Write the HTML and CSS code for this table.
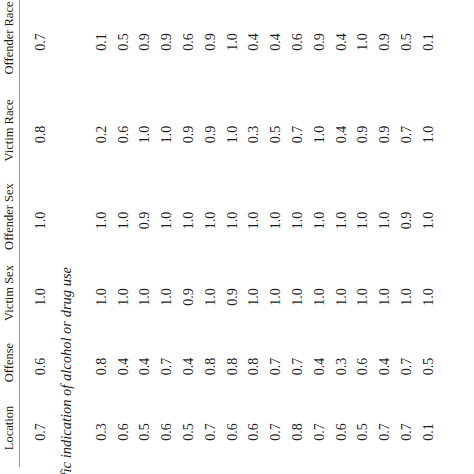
FILE: index.html
```html
<!DOCTYPE html>
<html>
<head>
<meta charset="utf-8">
<link rel="stylesheet" href="styles.css">
</head>
<body>
<div class="page">
  <div class="sheet">
    <div class="head-rule">
      <div class="grid head">
        <div>Location</div><div>Offense</div><div>Victim Sex</div><div>Offender Sex</div><div>Victim Race</div><div>Offender Race</div>
      </div>
    </div>
    <div class="grid row first"><div>0.7</div><div>0.6</div><div>1.0</div><div>1.0</div><div>0.8</div><div>0.7</div></div>
    <div class="caption"><span>No specific indication of alcohol or drug use</span></div>
    <div class="body">
      <div class="grid row"><div>0.3</div><div>0.8</div><div>1.0</div><div>1.0</div><div>0.2</div><div>0.1</div></div>
      <div class="grid row"><div>0.6</div><div>0.4</div><div>1.0</div><div>1.0</div><div>0.6</div><div>0.5</div></div>
      <div class="grid row"><div>0.5</div><div>0.4</div><div>1.0</div><div>0.9</div><div>1.0</div><div>0.9</div></div>
      <div class="grid row"><div>0.6</div><div>0.7</div><div>1.0</div><div>1.0</div><div>1.0</div><div>0.9</div></div>
      <div class="grid row"><div>0.5</div><div>0.4</div><div>0.9</div><div>1.0</div><div>0.9</div><div>0.6</div></div>
      <div class="grid row"><div>0.7</div><div>0.8</div><div>1.0</div><div>1.0</div><div>0.9</div><div>0.9</div></div>
      <div class="grid row"><div>0.6</div><div>0.8</div><div>0.9</div><div>1.0</div><div>1.0</div><div>1.0</div></div>
      <div class="grid row"><div>0.6</div><div>0.8</div><div>1.0</div><div>1.0</div><div>0.3</div><div>0.4</div></div>
      <div class="grid row"><div>0.7</div><div>0.7</div><div>1.0</div><div>1.0</div><div>0.5</div><div>0.4</div></div>
      <div class="grid row"><div>0.8</div><div>0.7</div><div>1.0</div><div>1.0</div><div>0.7</div><div>0.6</div></div>
      <div class="grid row"><div>0.7</div><div>0.4</div><div>1.0</div><div>1.0</div><div>1.0</div><div>0.9</div></div>
      <div class="grid row"><div>0.6</div><div>0.3</div><div>1.0</div><div>1.0</div><div>0.4</div><div>0.4</div></div>
      <div class="grid row"><div>0.5</div><div>0.6</div><div>1.0</div><div>1.0</div><div>0.9</div><div>1.0</div></div>
      <div class="grid row"><div>0.7</div><div>0.4</div><div>1.0</div><div>1.0</div><div>0.9</div><div>0.9</div></div>
      <div class="grid row"><div>0.7</div><div>0.7</div><div>1.0</div><div>0.9</div><div>0.7</div><div>0.5</div></div>
      <div class="grid row"><div>0.1</div><div>0.5</div><div>1.0</div><div>1.0</div><div>1.0</div><div>0.1</div></div>
    </div>
  </div>
</div>
</body>
</html>
```

FILE: styles.css
```css
html, body {
  margin: 0;
  padding: 0;
  background: #fff;
}
.page {
  width: 474px;
  height: 474px;
  overflow: hidden;
}
.sheet {
  width: 474px;
  height: 474px;
  transform: rotate(-90deg);
  font-family: "Liberation Serif", "Times New Roman", serif;
  color: #1c1c1c;
  background: #fff;
}
.grid {
  display: grid;
  grid-template-columns: 64px 67px 72px 81px 91px 94px;
  text-align: center;
  white-space: nowrap;
}
.head-rule {
  margin-left: 7px;
  border-bottom: 1px solid #9a9a9a;
}
.head {
  padding-left: 7px;
  font-size: 12.5px;
  line-height: 19px;
}
.row {
  padding-left: 10px;
  font-size: 14px;
  line-height: 21.8px;
}
.first {
  margin-top: 10px;
}
.caption {
  display: flex;
  justify-content: flex-end;
  width: 207px;
  margin-top: 3px;
  font-size: 14.5px;
  line-height: 22px;
  font-style: italic;
  white-space: nowrap;
}
.body {
  margin-top: 14px;
}
```
